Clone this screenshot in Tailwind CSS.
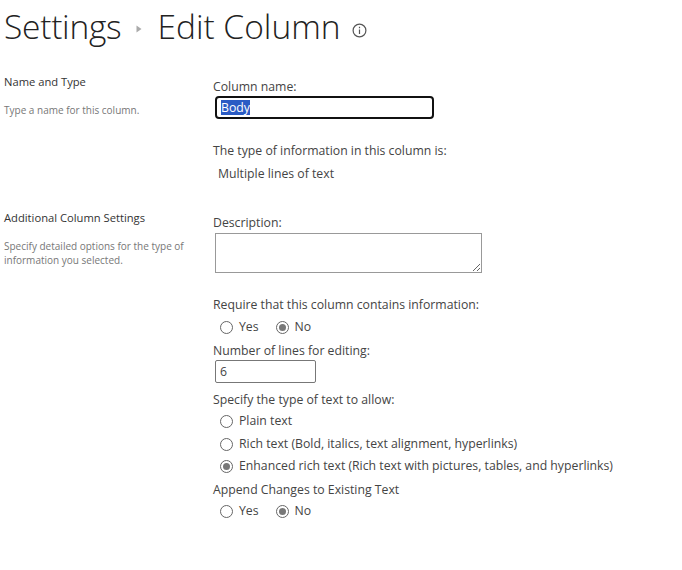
<!DOCTYPE html>
<html><head><script src="https://cdn.jsdelivr.net/npm/@tailwindcss/browser@4"></script></head>
<body class="bg-white font-['Open_Sans','Noto_Sans',sans-serif] text-[#333] w-[682px] h-[570px] overflow-hidden">
<header class="flex items-center h-[52px] text-[33.5px] text-[#222] font-light">
  <span class="ml-[4px] tracking-[-0.25px]">Settings</span>
  <svg class="ml-[15px] mt-[6px]" width="6" height="8" viewBox="0 0 6 8"><path d="M0.5 0.5L5.5 4L0.5 7.5Z" fill="#aaa"/></svg>
  <span class="ml-[15px]">Edit Column</span>
  <svg class="ml-[11px] mt-[8px]" width="15" height="15" viewBox="0 0 15 15" fill="none" stroke="#555" stroke-width="1.2"><circle cx="7.5" cy="7.5" r="6.4"/><path d="M7.5 6.5v4.5M7.5 3.8v1.5"/></svg>
</header>
<main class="flex pl-[4px] pt-[22px]">
  <aside class="w-[209px] shrink-0">
    <h2 class="text-[11.2px] leading-[16px] text-[#333]">Name and Type</h2>
    <p class="mt-[13px] text-[10px] leading-[14px] text-[#777]">Type a name for this column.</p>
    <h2 class="mt-[93px] text-[11.2px] leading-[16px] text-[#333]">Additional Column Settings</h2>
    <p class="mt-[13px] text-[10px] leading-[14px] text-[#777] w-[190px]">Specify detailed options for the type of information you selected.</p>
  </aside>
  <section class="text-[12.25px] leading-[16px] text-[#444] flex flex-col items-start">
    <label class="mt-[5px]">Column name:</label>
    <div class="mt-[1px] ml-[2px] w-[219px] h-[23px] border-2 border-[#111] rounded-[4px] px-[4px] flex items-center"><span class="bg-[#2a5bc4] text-white leading-[15px]">Body</span></div>
    <p class="mt-[24px]">The type of information in this column is:</p>
    <p class="mt-[7px] ml-[5px]">Multiple lines of text</p>
    <label class="mt-[33px]">Description:</label>
    <textarea class="mt-[2px] ml-[2px] w-[267px] h-[40px] border border-[#999] block"></textarea>
    <p class="mt-[24px]">Require that this column contains information:</p>
    <div class="mt-[6px] ml-[7px] flex items-center">
      <span class="w-[13px] h-[13px] rounded-full border border-[#666]"></span><span class="ml-[6px]">Yes</span>
      <span class="ml-[17px] w-[13px] h-[13px] rounded-full border border-[#666] flex items-center justify-center"><span class="w-[7px] h-[7px] rounded-full bg-[#777]"></span></span><span class="ml-[6px]">No</span>
    </div>
    <p class="mt-[8px]">Number of lines for editing:</p>
    <div class="mt-[1px] ml-[2px] w-[101px] h-[23px] border border-[#777] rounded-[2px] px-[4px] flex items-center">6</div>
    <p class="mt-[9px]">Specify the type of text to allow:</p>
    <div class="mt-[5px] ml-[7px] flex items-center"><span class="w-[13px] h-[13px] rounded-full border border-[#666]"></span><span class="ml-[6px]">Plain text</span></div>
    <div class="mt-[7px] ml-[7px] flex items-center"><span class="w-[13px] h-[13px] rounded-full border border-[#666]"></span><span class="ml-[6px]">Rich text (Bold, italics, text alignment, hyperlinks)</span></div>
    <div class="mt-[6px] ml-[7px] flex items-center"><span class="w-[13px] h-[13px] rounded-full border border-[#666] flex items-center justify-center"><span class="w-[7px] h-[7px] rounded-full bg-[#777]"></span></span><span class="ml-[6px]">Enhanced rich text (Rich text with pictures, tables, and hyperlinks)</span></div>
    <p class="mt-[8px]">Append Changes to Existing Text</p>
    <div class="mt-[5px] ml-[7px] flex items-center">
      <span class="w-[13px] h-[13px] rounded-full border border-[#666]"></span><span class="ml-[6px]">Yes</span>
      <span class="ml-[17px] w-[13px] h-[13px] rounded-full border border-[#666] flex items-center justify-center"><span class="w-[7px] h-[7px] rounded-full bg-[#777]"></span></span><span class="ml-[6px]">No</span>
    </div>
  </section>
</main>
</body></html>
